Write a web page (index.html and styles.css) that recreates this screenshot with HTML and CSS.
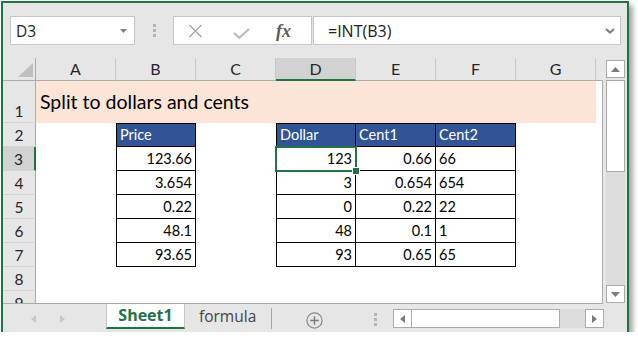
FILE: index.html
```html
<!DOCTYPE html>
<html>
<head>
<meta charset="utf-8">
<link rel="stylesheet" href="styles.css">
</head>
<body>
<div class="window">
  <div class="fbar">
    <div class="namebox"><span>D3</span><svg width="7" height="4" viewBox="0 0 7 4"><polygon points="0,0 7,0 3.5,4" fill="#7f7f7f"/></svg></div>
    <div class="grip"><i></i><i></i><i></i></div>
    <div class="fnbox">
      <svg class="ic-x" width="15" height="14" viewBox="0 0 15 14"><path d="M1.5 1 L13.5 13 M13.5 1 L1.5 13" stroke="#a6a6a6" stroke-width="1.4" fill="none"/></svg>
      <svg class="ic-ok" width="17" height="11" viewBox="0 0 17 11"><path d="M1 5 L6.2 9.8 L16 1" stroke="#bdbdbd" stroke-width="2.2" fill="none"/></svg>
      <span class="fx">fx</span>
    </div>
    <div class="finput"><span>=INT(B3)</span><svg width="10" height="6" viewBox="0 0 10 6"><path d="M1 1 L5 4.6 L9 1" stroke="#7f7f7f" stroke-width="2" fill="none"/></svg></div>
  </div>
  <div class="main">
    <div class="sheet">
      <div class="grid">
        <div class="corner"><svg width="33" height="23" viewBox="0 0 33 23"><polygon points="30,5 30,19 15,19" fill="#bfbfbf"/></svg></div>
        <div class="ch">A</div><div class="ch">B</div><div class="ch">C</div><div class="ch on">D</div><div class="ch">E</div><div class="ch">F</div><div class="ch">G</div><div class="ch last"></div>

        <div class="rh">1</div>
        <div class="c title">Split to dollars and cents</div>
        <div class="c h"></div>

        <div class="rh">2</div>
        <div class="c"></div><div class="c t l hd">Price</div><div class="c"></div>
        <div class="c t l hd">Dollar</div><div class="c t hd">Cent1</div><div class="c t hd">Cent2</div>
        <div class="c"></div><div class="c h"></div>

        <div class="rh on">3</div>
        <div class="c"></div><div class="c t l num">123.66</div><div class="c"></div>
        <div class="c t l num sel">123</div><div class="c t num">0.66</div><div class="c t">66</div>
        <div class="c"></div><div class="c h"></div>

        <div class="rh">4</div>
        <div class="c"></div><div class="c t l num">3.654</div><div class="c"></div>
        <div class="c t l num">3</div><div class="c t num">0.654</div><div class="c t">654</div>
        <div class="c"></div><div class="c h"></div>

        <div class="rh">5</div>
        <div class="c"></div><div class="c t l num">0.22</div><div class="c"></div>
        <div class="c t l num">0</div><div class="c t num">0.22</div><div class="c t">22</div>
        <div class="c"></div><div class="c h"></div>

        <div class="rh">6</div>
        <div class="c"></div><div class="c t l num">48.1</div><div class="c"></div>
        <div class="c t l num">48</div><div class="c t num">0.1</div><div class="c t">1</div>
        <div class="c"></div><div class="c h"></div>

        <div class="rh">7</div>
        <div class="c"></div><div class="c t l num">93.65</div><div class="c"></div>
        <div class="c t l num">93</div><div class="c t num">0.65</div><div class="c t">65</div>
        <div class="c"></div><div class="c h"></div>

        <div class="rh">8</div>
        <div class="c"></div><div class="c"></div><div class="c"></div><div class="c"></div><div class="c"></div><div class="c"></div><div class="c"></div><div class="c h"></div>

        <div class="rh">9</div>
        <div class="c"></div><div class="c"></div><div class="c"></div><div class="c"></div><div class="c"></div><div class="c"></div><div class="c"></div><div class="c h"></div>
      </div>
    </div>
    <div class="vscroll">
      <div class="sbtn"><svg width="9" height="5" viewBox="0 0 9 5"><polygon points="0,5 9,5 4.5,0" fill="#7a7a7a"/></svg></div>
      <div class="vthumb"></div>
      <div class="vtrack"></div>
      <div class="sbtn"><svg width="9" height="5" viewBox="0 0 9 5"><polygon points="0,0 9,0 4.5,5" fill="#7a7a7a"/></svg></div>
    </div>
  </div>
  <div class="tabbar">
    <div class="nav">
      <svg width="5" height="8" viewBox="0 0 5 8"><polygon points="5,0 5,8 0,4" fill="#c6c6c6"/></svg>
      <svg width="5" height="8" viewBox="0 0 5 8"><polygon points="0,0 0,8 5,4" fill="#c6c6c6"/></svg>
    </div>
    <div class="tab active">Sheet1</div>
    <div class="tab plain">formula</div>
    <div class="sep"></div>
    <svg class="add" width="17" height="17" viewBox="0 0 17 17"><circle cx="8.5" cy="8.5" r="7.6" stroke="#8a8a8a" stroke-width="1.2" fill="none"/><path d="M8.5 4.3 V12.7 M4.3 8.5 H12.7" stroke="#7a7a7a" stroke-width="1.4"/></svg>
    <div class="grip grip2"><i></i><i></i><i></i></div>
    <div class="hscroll">
      <div class="hbtn"><svg width="5" height="8" viewBox="0 0 5 8"><polygon points="5,0 5,8 0,4" fill="#7a7a7a"/></svg></div>
      <div class="hthumb"></div>
      <div class="htrack"></div>
      <div class="hbtn"><svg width="5" height="8" viewBox="0 0 5 8"><polygon points="0,0 0,8 5,4" fill="#7a7a7a"/></svg></div>
    </div>
  </div>
</div>
</body>
</html>
```
FILE: styles.css
```css
* { box-sizing: border-box; }
body { margin: 0; background: #fff; }
svg { display: block; }

.window {
  margin: 1px 0 0 1px;
  width: 628px;
  height: 331px;
  border: 2px solid #217346;
  border-bottom: 0;
  background: #e6e6e6;
  box-shadow: 4px 4px 5px rgba(0, 0, 0, 0.35);
  display: flex;
  flex-direction: column;
}

/* formula bar */
.fbar {
  height: 55px;
  flex: none;
  display: flex;
  align-items: flex-start;
  padding: 13px 0 0 7px;
  font-family: "Open Sans", "Noto Sans", sans-serif;
  color: #222;
}
.namebox {
  width: 125px;
  height: 29px;
  background: #fff;
  border: 1px solid #c6c6c6;
  display: flex;
  align-items: center;
  justify-content: space-between;
  padding: 0 7px 0 5px;
  font-size: 15.5px;
}
.grip {
  width: 3px;
  margin: 8px 17px 0 18px;
  display: flex;
  flex-direction: column;
  gap: 2px;
}
.grip i { display: block; width: 3px; height: 3px; background: #b4b4b4; }
.fnbox {
  width: 139px;
  height: 29px;
  background: #fff;
  border: 1px solid #c6c6c6;
  display: flex;
  align-items: center;
  padding-left: 14px;
}
.ic-ok { margin: 5px 0 0 30px; }
.fx {
  margin-left: 26px;
  font-family: "Liberation Serif", "DejaVu Serif", serif;
  font-style: italic;
  font-weight: 700;
  font-size: 18px;
  color: #5a5a5a;
  margin-top: 1px;
}
.finput {
  width: 308px;
  height: 29px;
  margin-left: 1px;
  background: #fff;
  border: 1px solid #c6c6c6;
  display: flex;
  align-items: center;
  justify-content: space-between;
  padding: 0 5px 0 14px;
  font-size: 16px;
}

/* sheet */
.main { display: flex; height: 246px; flex: none; }
.sheet {
  width: 600px;
  height: 246px;
  flex: none;
  overflow: hidden;
  border-bottom: 1px solid #ababab;
}
.grid {
  display: grid;
  grid-template-columns: 33px repeat(7, 80px) 7px;
  grid-template-rows: 23px 42px repeat(8, 24px);
  font-family: "Lato", "Liberation Sans", sans-serif;
}
.corner {
  background: #e6e6e6;
  border-right: 1px solid #ababab;
  border-bottom: 1px solid #ababab;
}
.ch {
  background: #e6e6e6;
  border-right: 1px solid #c8c8c8;
  border-bottom: 1px solid #ababab;
  display: flex;
  align-items: flex-end;
  justify-content: center;
  padding-bottom: 2px;
  font-size: 16px;
  line-height: 18px;
  color: #262626;
}
.ch.last { border-right: 0; }
.ch.on { background: #d2d2d2; border-bottom: 2px solid #217346; padding-bottom: 1px; }
.rh {
  background: #e6e6e6;
  border-right: 1px solid #ababab;
  border-bottom: 1px solid #d4d4d4;
  display: flex;
  align-items: flex-end;
  justify-content: center;
  padding-bottom: 2px;
  font-size: 15.5px;
  line-height: 18px;
  color: #262626;
}
.rh.on { background: #d2d2d2; border-right: 2px solid #217346; }

.c {
  background: #fff;
  display: flex;
  align-items: flex-end;
  padding: 0 3px 2px;
  font-size: 14.5px;
  line-height: 18px;
  color: #000;
  white-space: nowrap;
}
.c.h { border-right: 1px solid #ababab; padding: 0; }
.title {
  grid-column: span 7;
  background: #fce4d6;
  align-items: center;
  padding: 0 4px;
  font-size: 19.5px;
}
.t { border-right: 1px solid #000; border-bottom: 1px solid #000; }
.t.l { border-left: 1px solid #000; }
.hd { background: #305496; color: #fff; border-top: 1px solid #000; }
.num { justify-content: flex-end; }
.sel { position: relative; }
.sel::before {
  content: "";
  position: absolute;
  left: -2px;
  top: -1px;
  right: -2px;
  bottom: -2px;
  border: 2px solid #217346;
}
.sel::after {
  content: "";
  position: absolute;
  right: -4px;
  bottom: -4px;
  width: 6px;
  height: 6px;
  background: #217346;
  outline: 1px solid #fff;
}

/* vertical scrollbar */
.vscroll {
  width: 19px;
  margin-left: 3px;
  display: flex;
  flex-direction: column;
  padding: 2px 0 1px;
}
.sbtn {
  height: 18px;
  flex: none;
  background: #fff;
  border: 1px solid #ababab;
  display: flex;
  align-items: center;
  justify-content: center;
}
.vthumb { height: 92px; flex: none; margin-top: 2px; background: #fff; border: 1px solid #ababab; }
.vtrack { flex: 1; background: #dcdcdc; }

/* sheet tabs */
.tabbar {
  height: 28px;
  flex: none;
  display: flex;
  align-items: flex-start;
  font-family: "Open Sans", "Noto Sans", sans-serif;
}
.nav {
  width: 103px;
  height: 25px;
  display: flex;
  align-items: center;
  gap: 24px;
  padding: 4px 0 0 28px;
}
.tab { height: 25px; display: flex; align-items: center; }
.tab.active {
  width: 79px;
  background: #fff;
  border-left: 1px solid #c6c6c6;
  border-right: 1px solid #c6c6c6;
  border-bottom: 2px solid #217346;
  justify-content: center;
  font-weight: 700;
  font-size: 16px;
  color: #217346;
  padding-bottom: 1px;
}
.tab.plain { padding: 0 15px 2px 14px; font-size: 15.5px; color: #444; }
.sep { width: 1px; height: 21px; margin-top: 4px; background: #a6a6a6; }
.add { margin: 8px 0 0 34px; }
.grip2 { margin: 9px 0 0 51px; }
.hscroll {
  width: 211px;
  height: 19px;
  margin: 5px 0 0 16px;
  display: flex;
}
.hbtn {
  width: 19px;
  flex: none;
  background: #fff;
  border: 1px solid #ababab;
  display: flex;
  align-items: center;
  justify-content: center;
}
.hthumb { width: 148px; flex: none; background: #fff; border: 1px solid #ababab; border-left: 0; }
.htrack { flex: 1; background: #dcdcdc; }
```
